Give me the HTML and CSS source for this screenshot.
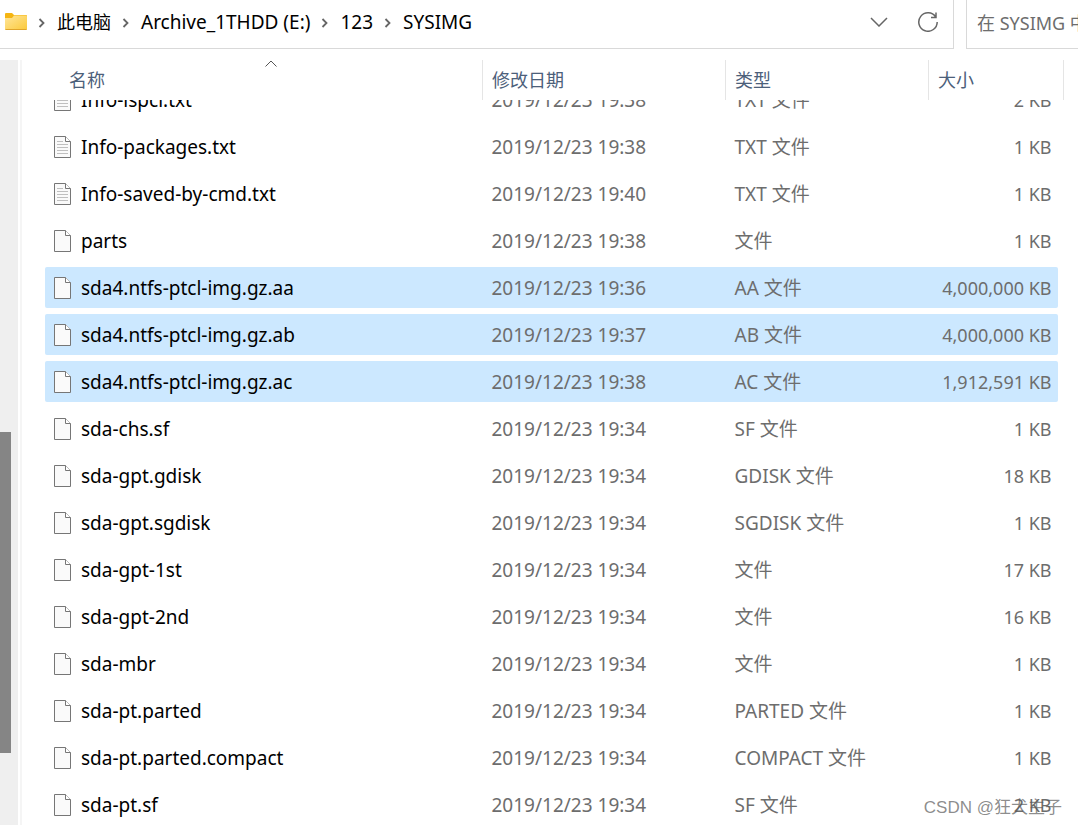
FILE: index.html
```html
<!DOCTYPE html>
<html lang="zh-CN">
<head>
<meta charset="utf-8">
<title>SYSIMG</title>
<link rel="stylesheet" href="styles.css">
</head>
<body>
<svg class="defs" aria-hidden="true">
  <symbol id="file" viewBox="0 0 17 22"><path d="M.5.5H11.5L16.5 5.5V21.5H.5Z" fill="#fafafa" stroke="#767676"/><path d="M11.5.5V5.5H16.5" fill="#fff" stroke="#767676"/></symbol>
  <symbol id="text" viewBox="0 0 17 22"><use href="#file"/><path d="M3 5.5H9M3 8.5H14M3 11.5H14M3 14.5H14M3 17.5H14" stroke="#bfbfbf"/></symbol>
  <symbol id="next" viewBox="0 0 8 10"><path d="M1.5 1L5.5 5L1.5 9" fill="none" stroke="#666" stroke-width="1.8"/></symbol>
</svg>
<header class="topbar">
  <nav class="address" aria-label="路径">
    <svg class="folder" viewBox="0 0 22 18"><defs><linearGradient id="g" x2="1" y2="1"><stop stop-color="#ffe69b"/><stop offset="1" stop-color="#fbc93a"/></linearGradient></defs><path d="M0 1Q0 0 1 0H7L9 2H21Q22 2 22 3V8H0Z" fill="#f5b512"/><path d="M0 5H7L9 2.5H21Q22 2.5 22 4V16Q22 17 21 17H1Q0 17 0 16Z" fill="url(#g)"/><path d="M.5 16.5H21.5" stroke="#e0a52b"/></svg>
    <svg class="next"><use href="#next"/></svg>
    <a class="root" href="#">此电脑</a>
    <svg class="next"><use href="#next"/></svg>
    <a href="#">Archive_1THDD (E:)</a>
    <svg class="next"><use href="#next"/></svg>
    <a href="#">123</a>
    <svg class="next"><use href="#next"/></svg>
    <a href="#">SYSIMG</a>
    <span class="tools">
      <button aria-label="历史记录"><svg class="down" viewBox="0 0 18 10"><path d="M1 1L9 9L17 1" fill="none" stroke="#666" stroke-width="1.5"/></svg></button>
      <button aria-label="刷新"><svg class="refresh" viewBox="0 0 20 20"><path d="M17.7 5A9.2 9.2 0 1 0 19.2 10M18 0.5V5.5H13" fill="none" stroke="#666" stroke-width="1.5"/></svg></button>
    </span>
  </nav>
  <input class="search" type="text" aria-label="搜索" placeholder="在 SYSIMG 中搜索">
</header>
<div class="body">
  <aside class="rail"><div class="thumb"></div></aside>
  <main class="list">
    <table>
      <colgroup><col><col class="c-date"><col class="c-type"><col class="c-size"></colgroup>
      <thead><tr>
        <th class="h-name" aria-sort="ascending"><svg class="sort" viewBox="0 0 12 7"><path d="M.5 6.5L6 1L11.5 6.5" fill="none" stroke="#555"/></svg><div>名称</div></th>
        <th><div>修改日期</div></th><th><div>类型</div></th><th><div>大小</div></th>
      </tr></thead>
      <tbody id="rows"></tbody>
    </table>
  </main>
</div>
<div class="watermark">CSDN @狂犬主子</div>
<script src="rows.js"></script>
</body>
</html>
```
FILE: styles.css
```css
* { box-sizing: border-box; }
body {
  margin: 0;
  height: 100vh;
  overflow: hidden;
  display: flex;
  flex-direction: column;
  background: #fff;
  color: #000;
  font: 18px/24px "Noto Sans", "Noto Sans CJK SC", sans-serif;
}
svg { display: block; flex: none; }
.defs { position: absolute; width: 0; height: 0; }
.topbar { display: flex; gap: 12px; height: 49px; flex: none; }
.address {
  flex: 1;
  display: flex;
  align-items: center;
  padding: 0 15px 4px 5px;
  border: solid #d9d9d9;
  border-width: 0 1px 1px 0;
}
.address a { color: #000; font-size: 19px; text-decoration: none; white-space: nowrap; }
.address .root { font-size: 18px; }
.folder { width: 22px; height: 18px; }
.next { width: 8px; height: 10px; margin: 2px 11px 0; }
.tools { margin-left: auto; display: flex; align-items: center; gap: 30px; }
button { padding: 0; border: 0; background: none; }
.down { width: 18px; height: 10px; }
.refresh { width: 20px; height: 20px; }
.search {
  width: 112px;
  padding: 0 0 2px 10px;
  border: solid #d9d9d9;
  border-width: 0 0 1px 1px;
  border-radius: 0;
  background: #fff;
  font: inherit;
  outline: 0;
}
.search::placeholder { color: #6d6d6d; opacity: 1; }
.body { flex: 1; min-height: 0; display: flex; margin-top: 11px; }
.rail { width: 18px; background: #efefef; flex: none; }
.thumb { width: 11px; height: 321px; margin-top: 372px; background: #858585; }
.list {
  flex: 1;
  min-width: 0;
  overflow: hidden;
  margin-left: 2px;
  padding: 0 14px 0 23px;
  border-left: 2px solid #f5f5f5;
}
table { width: 100%; table-layout: fixed; border-collapse: collapse; }
.c-date { width: 243px; }
.c-type { width: 203px; }
.c-size { width: 135px; }
th {
  height: 40px;
  padding: 0 0 0 9px;
  border-right: 1px solid #e5e5e5;
  color: #4c607a;
  font-weight: 400;
  text-align: left;
  vertical-align: bottom;
}
th div { padding-bottom: 8px; }
.h-name { padding-left: 24px; }
.sort { width: 12px; height: 7px; margin: 0 0 1px 196px; }
td { padding: 0 0 6px; }
.cell {
  display: flex;
  align-items: center;
  gap: 10px;
  height: 41px;
  padding-left: 9px;
  color: #6d6d6d;
  font-size: 19px;
  white-space: nowrap;
}
.cell.name { color: #000; border-radius: 2px 0 0 2px; }
.cell.size {
  justify-content: flex-end;
  margin-right: 6px;
  padding-right: 6px;
  border-radius: 0 2px 2px 0;
  font-size: 18px;
}
.icon { width: 17px; height: 22px; }
.selected .cell { background: #cce8ff; }
.partial .cell { height: 20px; overflow: hidden; align-items: flex-end; }
.partial .icon { margin-bottom: 9px; }
.partial span { margin-bottom: 8px; }
.watermark {
  position: absolute;
  right: 16px;
  bottom: 5px;
  color: rgba(90, 90, 90, 0.7);
  font: 17px/24px "Liberation Sans", "Noto Sans CJK SC", sans-serif;
}
```
FILE: rows.js
```js
const files = [
  ["Info-lspci.txt", "19:38", "TXT 文件", "2", "partial"],
  ["Info-packages.txt", "19:38", "TXT 文件", "1"],
  ["Info-saved-by-cmd.txt", "19:40", "TXT 文件", "1"],
  ["parts", "19:38", "文件", "1"],
  ["sda4.ntfs-ptcl-img.gz.aa", "19:36", "AA 文件", "4,000,000", "selected"],
  ["sda4.ntfs-ptcl-img.gz.ab", "19:37", "AB 文件", "4,000,000", "selected"],
  ["sda4.ntfs-ptcl-img.gz.ac", "19:38", "AC 文件", "1,912,591", "selected"],
  ["sda-chs.sf", "19:34", "SF 文件", "1"],
  ["sda-gpt.gdisk", "19:34", "GDISK 文件", "18"],
  ["sda-gpt.sgdisk", "19:34", "SGDISK 文件", "1"],
  ["sda-gpt-1st", "19:34", "文件", "17"],
  ["sda-gpt-2nd", "19:34", "文件", "16"],
  ["sda-mbr", "19:34", "文件", "1"],
  ["sda-pt.parted", "19:34", "PARTED 文件", "1"],
  ["sda-pt.parted.compact", "19:34", "COMPACT 文件", "1"],
  ["sda-pt.sf", "19:34", "SF 文件", "2"]
];
document.getElementById("rows").innerHTML = files.map(([name, time, type, size, state = ""]) => `
  <tr class="${state}">
    <td><div class="cell name"><svg class="icon"><use href="#${name.endsWith(".txt") ? "text" : "file"}"/></svg><span>${name}</span></div></td>
    <td><div class="cell"><span>2019/12/23 ${time}</span></div></td>
    <td><div class="cell"><span>${type}</span></div></td>
    <td><div class="cell size"><span>${size} KB</span></div></td>
  </tr>`).join("");
```
